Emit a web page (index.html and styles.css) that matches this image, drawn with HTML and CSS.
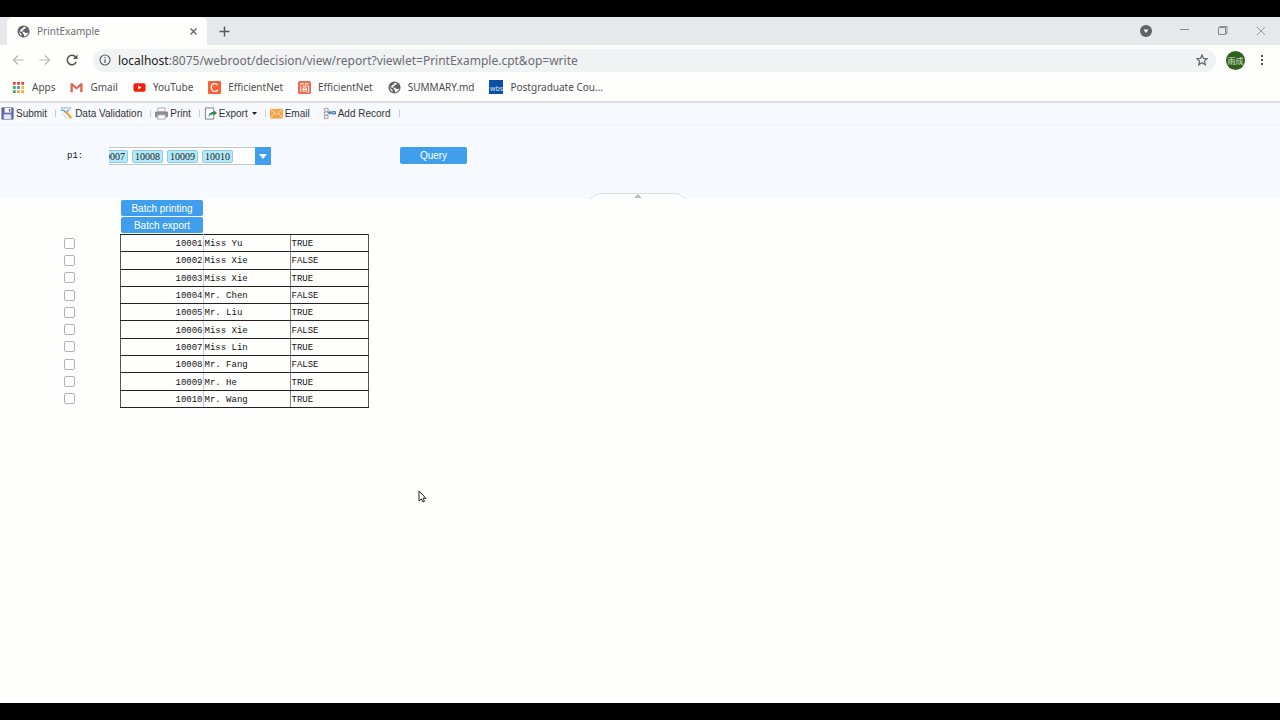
FILE: index.html
```
<!DOCTYPE html>
<html lang="en">
<head>
    <meta charset="UTF-8">
    <title>PrintExample</title>
    <link rel="stylesheet" href="styles.css">
</head>
<body>
    <svg class="defs" aria-hidden="true">
        <symbol id="globe" viewBox="0 0 14 14">
            <circle cx="7" cy="7" r="6.5" fill="#5f6368"/>
            <path d="M7.5 1.8l2 .6-.2 1.5-2 .4-.3 1.4-1.600.6.2 1h2.200l1.200 1.200h2l1.200-.8.2-1.500a5.300 5.300 0 0 1-2.200 5l-1.800.9-.9-.2.3-1.600-1.500-1.200-.2-1.300-2.200-1.200-1.600.1A5.300 5.300 0 0 0 5 11.800l-.2-2L1.800 7.200z" fill="#fff"/>
        </symbol>
    </svg>

    <div class="bar"></div>

    <div class="tabs">
        <div class="tab">
            <svg class="icon" viewBox="0 0 14 14"><use href="#globe"/></svg>
            <span>PrintExample</span>
            <button class="close" aria-label="Close tab"><svg width="7" height="7" viewBox="0 0 7 7"><path d="M.5.5l6 6M6.500.5l-6 6" stroke="#5f6368" stroke-width="1.300"/></svg></button>
        </div>
        <button class="plus" aria-label="New tab"><svg width="11" height="11" viewBox="0 0 11 11"><path d="M5.500.5v10M.5 5.500h10" stroke="#55595d" stroke-width="1.500"/></svg></button>
        <div class="window">
            <button aria-label="Search tabs"><svg width="12" height="12" viewBox="0 0 12 12"><circle cx="6" cy="6" r="6" fill="#5f6368"/><path d="M3.500 4.500h5L6 8z" fill="#fff"/></svg></button>
            <button aria-label="Minimize"><svg width="10" height="10" viewBox="0 0 10 10"><path d="M0 3.500h9" stroke="#888"/></svg></button>
            <button aria-label="Restore"><svg width="10" height="10" viewBox="0 0 10 10"><path d="M.5 1.500h7v7h-7zM2 1.500v-1h7v7H7.500" fill="none" stroke="#888"/></svg></button>
            <button aria-label="Close"><svg width="10" height="10" viewBox="0 0 10 10"><path d="M1 1l8 8M9 1L1 9" stroke="#999"/></svg></button>
        </div>
    </div>

    <div class="nav">
        <button aria-label="Back"><svg width="12" height="12" viewBox="0 0 12 12"><path d="M11.500 6H1.500M6 1.500L1.500 6 6 10.500" fill="none" stroke="#b4b6b8" stroke-width="1.200"/></svg></button>
        <button aria-label="Forward"><svg width="12" height="12" viewBox="0 0 12 12"><path d="M.5 6h10M6 1.500L10.500 6 6 10.500" fill="none" stroke="#b4b6b8" stroke-width="1.200"/></svg></button>
        <button aria-label="Reload"><svg width="12" height="12" viewBox="0 0 12 12"><path d="M10.300 7.800A4.700 4.700 0 1 1 9.700 3.200" fill="none" stroke="#505458" stroke-width="1.500"/><path d="M11.500.5v4.500H7z" fill="#505458"/></svg></button>
        <div class="address">
            <svg width="12" height="12" viewBox="0 0 12 12"><circle cx="6" cy="6" r="5" fill="none" stroke="#5f6368" stroke-width="1.200"/><path d="M6 5.200V9M6 3v1.300" stroke="#5f6368" stroke-width="1.300"/></svg>
            <span class="url"><b>localhost</b>:8075/webroot/decision/view/report?viewlet=PrintExample.cpt&amp;op=write</span>
            <button aria-label="Bookmark"><svg width="12" height="12" viewBox="0 0 12 12"><path d="M6 1l1.500 3.400 3.700.3-2.800 2.400.9 3.600L6 8.800l-3.300 1.900.9-3.600L.8 4.700l3.700-.3z" fill="none" stroke="#5f6368" stroke-width="1.200"/></svg></button>
        </div>
        <span class="avatar">雨成</span>
        <button aria-label="Menu"><svg width="4" height="12" viewBox="0 0 4 12"><path d="M1 1h2v2H1zM1 5h2v2H1zM1 9h2v2H1z" fill="#505458"/></svg></button>
    </div>

    <div class="bookmarks">
        <a href="#"><svg class="icon" viewBox="0 0 14 14"><path d="M1 1h3v3H1zM5.500 1h3v3h-3zM10 1h3v3h-3z" fill="#ea4335"/><path d="M1 5.500h3v3H1z" fill="#34a853"/><path d="M5.500 5.500h3v3h-3z" fill="#4285f4"/><path d="M10 5.500h3v3h-3z" fill="#fbbc05"/><path d="M1 10h3v3H1z" fill="#34a853"/><path d="M5.500 10h3v3h-3zM10 10h3v3h-3z" fill="#f2a33a"/></svg>Apps</a>
        <a href="#"><svg class="icon" viewBox="0 0 14 14"><path d="M.5 2.500H2.500L7 6.500l4.500-4h2V12h-2.500V6L7 9.200 3 6v6H.5z" fill="#e06055"/></svg>Gmail</a>
        <a href="#"><svg class="icon" viewBox="0 0 14 14"><rect x="0.500" y="2.500" width="13" height="9" rx="2" fill="#f61c0d"/><path d="M5.500 4.800v4.400L9.200 7z" fill="#fff"/></svg>YouTube</a>
        <a href="#"><svg class="icon" viewBox="0 0 14 14"><rect width="14" height="14" rx="1" fill="#fc6136"/><path d="M10.500 4.500C8.500 1.500 3.500 2.500 3.500 7s5 5.500 7 2.500" fill="none" stroke="#fff" stroke-width="1.400"/></svg>EfficientNet</a>
        <a href="#"><svg class="icon" viewBox="0 0 14 14"><rect width="14" height="14" rx="2" fill="#ee6a50"/><path d="M4 2L2.500 4.500M3.500 3h3M8.500 2L7.500 4M8.500 3h3M3 5.500V12M5 5.500h6.500V12H10M5.500 7.500h3.500v3.500H5.500zM5.500 9.200H9" fill="none" stroke="#fff"/></svg>EfficientNet</a>
        <a href="#"><svg class="icon" viewBox="0 0 14 14"><use href="#globe"/></svg>SUMMARY.md</a>
        <a href="#"><span class="wbs">wbs</span>Postgraduate Cou...</a>
    </div>

    <div class="toolbar">
        <button><svg class="icon" viewBox="0 0 14 14"><path d="M1 1h12v12H1z" fill="#6b72ae" stroke="#51578e"/><path d="M4 1h7v5H4z" fill="#fff"/><path d="M8.500 2h1.500v3H8.500z" fill="#51578e"/><path d="M3 8h8v5H3z" fill="#e4e8f4"/></svg>Submit</button>
        <i></i>
        <button><svg class="icon" viewBox="0 0 14 14"><path d="M1 1h12" stroke="#738496" stroke-dasharray="2 1"/><path d="M1 3.500h3L6 6l4-3" fill="none" stroke="#5aa6e6" stroke-width="1.500"/><path d="M5 5l2-1 6 7-2 2z" fill="#f0a13a"/><path d="M3 7l5 6" stroke="#a8d4f2"/></svg>Data Validation</button>
        <i></i>
        <button><svg class="icon" viewBox="0 0 14 14"><path d="M3 1h8v4H3z" fill="#f8f8f8" stroke="#aaa"/><path d="M0 5h14v6H0z" fill="#8b8d91"/><path d="M3 8.500h8V13H3z" fill="#fff" stroke="#aaa"/></svg>Print</button>
        <i></i>
        <button><svg class="icon" viewBox="0 0 14 14"><path d="M10.500 3V1h-9v12h9V10" fill="#fff" stroke="#777"/><path d="M5 11c0-4 2-5.500 5-5.500V3l4 3.500-4 3.500V8c-2 0-4 .5-5 3z" fill="#2f8f55"/></svg>Export<svg class="caret" width="5" height="3" viewBox="0 0 5 3"><path d="M0 0h5L2.500 3z" fill="#222"/></svg></button>
        <i></i>
        <button><svg class="icon" viewBox="0 0 14 14"><path d="M0 2h14v10.500H0z" fill="#f2a64c"/><path d="M.5 2.500L7 8l6.500-5.500M.5 12L5 6.500M13.500 12L9 6.500" fill="none" stroke="#fbdcae"/></svg>Email</button>
        <i class="faint"></i>
        <button><svg class="icon" viewBox="0 0 14 14"><path d="M1.500 1.500h4v3h-4zM1.500 5.500h4v3h-4zM1.500 9.500h4v3h-4z" fill="#fff" stroke="#999"/><path d="M5 6l3-2.500v1.500h1v2H8v1.500z" fill="#2f8fe0"/><path d="M9.500 5h4v2.500h-4z" fill="#9dc8ee" stroke="#41699a"/></svg>Add Record</button>
        <i></i>
    </div>

    <form class="params">
        <label for="p1">p1:</label>
        <div class="combo">
            <div class="values">
                <span>10007</span>
                <span>10008</span>
                <span>10009</span>
                <span>10010</span>
                <input type="text" id="p1">
            </div>
            <button type="button" aria-label="Open list"><svg width="8" height="5" viewBox="0 0 8 5"><path d="M0 0h8L4 5z" fill="#fff"/></svg></button>
        </div>
        <button type="button" class="blue query">Query</button>
        <svg class="fold" width="96" height="6" viewBox="0 0 96 6"><path d="M0 6C4 5 5 .5 11 .5h74C91 .5 92 5 96 6" fill="#fdfeff" stroke="#dcdfe2"/><path d="M44 5l4-4 4 4z" fill="#bbb"/></svg>
    </form>

    <div class="report">
        <div class="batch">
            <button class="blue">Batch printing</button>
            <button class="blue">Batch export</button>
        </div>
        <table>
            <tr><td><input type="checkbox" aria-label="10001"></td><td>10001</td><td>Miss Yu</td><td>TRUE</td></tr>
            <tr><td><input type="checkbox" aria-label="10002"></td><td>10002</td><td>Miss Xie</td><td>FALSE</td></tr>
            <tr><td><input type="checkbox" aria-label="10003"></td><td>10003</td><td>Miss Xie</td><td>TRUE</td></tr>
            <tr><td><input type="checkbox" aria-label="10004"></td><td>10004</td><td>Mr. Chen</td><td>FALSE</td></tr>
            <tr><td><input type="checkbox" aria-label="10005"></td><td>10005</td><td>Mr. Liu</td><td>TRUE</td></tr>
            <tr><td><input type="checkbox" aria-label="10006"></td><td>10006</td><td>Miss Xie</td><td>FALSE</td></tr>
            <tr><td><input type="checkbox" aria-label="10007"></td><td>10007</td><td>Miss Lin</td><td>TRUE</td></tr>
            <tr><td><input type="checkbox" aria-label="10008"></td><td>10008</td><td>Mr. Fang</td><td>FALSE</td></tr>
            <tr><td><input type="checkbox" aria-label="10009"></td><td>10009</td><td>Mr. He</td><td>TRUE</td></tr>
            <tr><td><input type="checkbox" aria-label="10010"></td><td>10010</td><td>Mr. Wang</td><td>TRUE</td></tr>
        </table>
        <svg class="pointer" width="9" height="13" viewBox="0 0 9 13"><path d="M1 1v10l2.300-2 1.700 3 1.500-.7L5 8.300h3z" fill="#fff" stroke="#222"/></svg>
    </div>

    <div class="bar"></div>
</body>
</html>
```
FILE: styles.css
```
*{
    margin: 0;
    padding: 0;
    box-sizing: border-box;
}
body{
    min-height: 100vh;
    display: flex;
    flex-direction: column;
    background: #fefefd;
    font-family: "Liberation Sans", Arial, sans-serif;
    font-size: 10px;
    color: #333;
}
button{
    border: none;
    background: none;
    font: inherit;
    color: inherit;
    display: flex;
    align-items: center;
    justify-content: center;
    cursor: pointer;
}
svg{
    display: block;
    flex: none;
}
.defs{
    position: absolute;
    width: 0;
    height: 0;
}
.icon{
    width: 13px;
    height: 13px;
}
.bar{
    height: 17px;
    background: #000;
}

/* browser */
.tabs, .nav, .bookmarks{
    display: flex;
    align-items: center;
    font-family: "Noto Sans", "Noto Sans CJK SC", sans-serif;
    font-size: 10px;
}
.tabs{
    height: 28px;
    padding-left: 7px;
    background: #e6e9ec;
}
.tab{
    width: 200px;
    height: 100%;
    padding: 0 10px;
    display: flex;
    align-items: center;
    gap: 7px;
    background: #fefefd;
    border-radius: 6px 6px 0 0;
    color: #6b6e72;
}
.close{
    margin-left: auto;
}
.plus{
    margin-left: 12px;
}
.window{
    margin-left: auto;
    padding-right: 14px;
    display: flex;
    gap: 28px;
}
.nav{
    height: 30px;
    padding: 0 16px 0 12px;
    gap: 15px;
    font-size: 12px;
}
.address{
    flex: 1;
    height: 23px;
    margin-right: -5px;
    padding: 0 8px 0 6px;
    display: flex;
    align-items: center;
    gap: 7px;
    border-radius: 12px;
    background: #f1f2f4;
    color: #6a6d71;
}
.address b{
    font-weight: normal;
    color: #222;
}
.url{
    flex: 1;
}
.avatar{
    width: 19px;
    height: 19px;
    border-radius: 50%;
    background: #2f611c;
    color: #dfe8da;
    font-size: 8px;
    line-height: 19px;
    text-align: center;
}
.bookmarks{
    height: 28px;
    padding: 0 12px 2px;
    gap: 15px;
    border-bottom: 2px solid #dcdee1;
}
.bookmarks a{
    display: flex;
    align-items: center;
    gap: 7px;
    color: #4a4c50;
    text-decoration: none;
}
.wbs{
    width: 14px;
    height: 14px;
    background: #0c50a4;
    color: #d5e2f2;
    font-size: 7px;
    line-height: 18px;
    text-align: center;
    overflow: hidden;
}

/* report toolbar */
.toolbar{
    height: 22px;
    display: flex;
    align-items: center;
    gap: 4px;
    padding-left: 1px;
    border-bottom: 1px solid #f0f1f5;
    background: #f7f9fd;
}
.toolbar button{
    gap: 2px;
}
.toolbar i{
    width: 1px;
    height: 7px;
    margin-left: 4px;
    background: #c9cbd0;
}
.toolbar .faint{
    background: #f0f1f5;
}
.caret{
    margin-left: 2px;
}

/* parameters */
.params{
    position: relative;
    height: 74px;
    padding: 22px 67px;
    display: flex;
    align-items: flex-start;
    background: #f6f9fd;
}
.params label{
    width: 42px;
    font: 9px/18px "Liberation Mono", monospace;
    color: #111;
}
.combo{
    width: 162px;
    height: 18px;
    display: flex;
}
.values{
    flex: 1;
    min-width: 0;
    display: flex;
    align-items: center;
    justify-content: flex-end;
    gap: 4px;
    overflow: hidden;
    border: solid #c3c5c8;
    border-width: 1px 0;
    background: #fff;
}
.values span{
    flex: none;
    width: 31px;
    height: 13px;
    border: 1px solid #8fcbe4;
    border-radius: 2px;
    background: #b2e9fb;
    color: #222;
    font: 10px/11px "Liberation Serif", serif;
    text-align: center;
}
.values input{
    flex: none;
    width: 18px;
    height: 14px;
    border: none;
    outline: none;
    background: none;
}
.combo button{
    width: 16px;
    background: #3f9fec;
}
.blue{
    height: 17px;
    border-radius: 2px;
    background: #3f9fec;
    color: #fff;
}
.query{
    width: 67px;
    margin-left: 129px;
}
.fold{
    position: absolute;
    bottom: 0;
    left: calc(50% - 50px);
}

/* report */
.report{
    position: relative;
    flex: 1;
    padding: 1px 64px;
}
.batch{
    width: 82px;
    margin-left: 57px;
    display: grid;
    gap: 1px;
}
.batch .blue{
    height: 16px;
}
table{
    width: 305px;
    height: 174px;
    margin-top: 1px;
    table-layout: fixed;
    border-collapse: collapse;
    font: 9px/12px "Liberation Mono", monospace;
    color: #111;
}
td{
    border: solid #222;
    border-width: 1px 0;
    padding: 2px 1px 0;
}
td:nth-of-type(1){
    width: 56px;
    padding: 0;
    border: none;
}
td:nth-of-type(2){
    width: 83px;
    padding: 2px 0 0;
    border-left: 1px solid #555;
    border-right: 1px solid #ccc;
    text-align: right;
}
td:nth-of-type(3){
    width: 87px;
}
td:nth-of-type(4){
    border-left: 1px solid #888;
    border-right: 1px solid #555;
}
td input{
    display: block;
    appearance: none;
    width: 11px;
    height: 11px;
    border: 1px solid #aeb2b8;
    border-radius: 2px;
    background: #fff;
}
.pointer{
    position: absolute;
    left: 418px;
    top: 291px;
}
```
